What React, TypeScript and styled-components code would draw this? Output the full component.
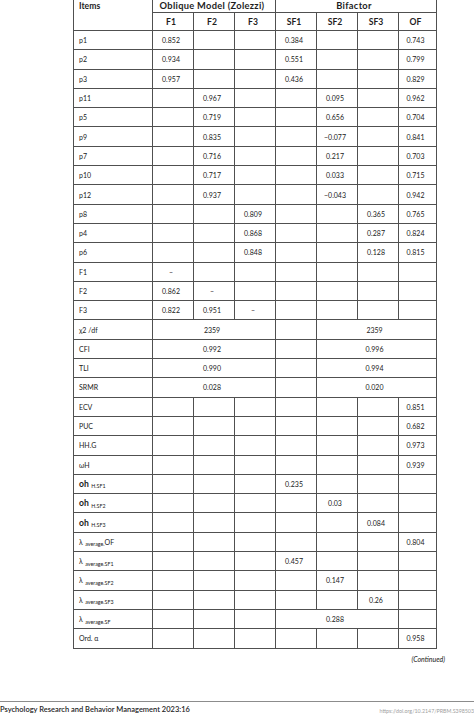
import React, { FC, ReactNode } from "react";
import styled, { createGlobalStyle } from "styled-components";

const GlobalStyle = createGlobalStyle`
  html, body {
    margin: 0;
    padding: 0;
    background: #fff;
  }
  body {
    font-family: Lato, "Open Sans", "Liberation Sans", sans-serif;
    color: #222;
  }
`;

const Page = styled.div`
  width: 474px;
  height: 717px;
  overflow: hidden;
  display: flex;
  flex-direction: column;
`;

const TableWrap = styled.div`
  margin: -6px 0 0 73px;
  width: 363px;
`;

const Table = styled.table`
  border-collapse: collapse;
  table-layout: fixed;
  width: 363px;
`;

const Row = styled.tr<{ h: number }>`
  height: ${(p) => p.h}px;
`;

const Th = styled.th<{ left?: boolean; top?: boolean; wide?: boolean }>`
  border: 1px solid #505050;
  font-size: ${(p) => (p.wide ? "9.3px" : "8.6px")};
  letter-spacing: ${(p) => (p.wide ? "0.3px" : "0")};
  line-height: 10px;
  font-weight: 700;
  color: #1e1e1e;
  padding: ${(p) =>
    p.left ? "6px 0 0 5px" : p.wide ? "0 4px 1px 0" : "0 4px 0 0"};
  text-align: ${(p) => (p.left ? "left" : "center")};
  vertical-align: ${(p) => (p.top ? "top" : p.wide ? "bottom" : "middle")};
  white-space: nowrap;
`;

const Td = styled.td<{ label?: boolean }>`
  border: 1px solid #505050;
  font-size: 7px;
  color: #1a1a1a;
  padding: ${(p) => (p.label ? "0 0 0 5px" : "0 4px 0 0")};
  text-align: ${(p) => (p.label ? "left" : "center")};
  vertical-align: middle;
  white-space: nowrap;
  overflow: hidden;
`;

const Sub = styled.sub`
  font-size: 5.3px;
  vertical-align: -1.5px;
  line-height: 0;
  margin-left: 2.5px;
`;

const Omega = styled.span`
  font-weight: 700;
  font-size: 8.6px;
`;

const Continued = styled.div`
  text-align: right;
  padding-right: 29px;
  margin-top: 6px;
  font-size: 7px;
  font-style: italic;
  color: #222;
`;

const Footer = styled.div`
  margin-top: auto;
  height: 12px;
  border-top: 1px solid #8c8c8c;
  display: flex;
  justify-content: space-between;
  align-items: flex-start;
  padding-top: 3px;
`;

const Journal = styled.span`
  font-size: 7.5px;
  font-weight: 600;
  color: #262626;
  line-height: 10px;
`;

const Doi = styled.span`
  font-size: 5.3px;
  color: #a0a0a0;
  line-height: 8px;
  padding-top: 2px;
`;

type Cell = string | { text: string; span: number };

type BodyRow = { label: ReactNode; cells: Cell[] };

const e = "";
const DASH = "–";

const rows: BodyRow[] = [
  { label: "p1", cells: ["0.852", e, e, "0.384", e, e, "0.743"] },
  { label: "p2", cells: ["0.934", e, e, "0.551", e, e, "0.799"] },
  { label: "p3", cells: ["0.957", e, e, "0.436", e, e, "0.829"] },
  { label: "p11", cells: [e, "0.967", e, e, "0.095", e, "0.962"] },
  { label: "p5", cells: [e, "0.719", e, e, "0.656", e, "0.704"] },
  { label: "p9", cells: [e, "0.835", e, e, "−0.077", e, "0.841"] },
  { label: "p7", cells: [e, "0.716", e, e, "0.217", e, "0.703"] },
  { label: "p10", cells: [e, "0.717", e, e, "0.033", e, "0.715"] },
  { label: "p12", cells: [e, "0.937", e, e, "−0.043", e, "0.942"] },
  { label: "p8", cells: [e, e, "0.809", e, e, "0.365", "0.765"] },
  { label: "p4", cells: [e, e, "0.868", e, e, "0.287", "0.824"] },
  { label: "p6", cells: [e, e, "0.848", e, e, "0.128", "0.815"] },
  { label: "F1", cells: [DASH, e, e, e, e, e, e] },
  { label: "F2", cells: ["0.862", DASH, e, e, e, e, e] },
  { label: "F3", cells: ["0.822", "0.951", DASH, e, e, e, e] },
  {
    label: "χ2 /df",
    cells: [{ text: "2359", span: 3 }, e, { text: "2359", span: 3 }],
  },
  {
    label: "CFI",
    cells: [{ text: "0.992", span: 3 }, e, { text: "0.996", span: 3 }],
  },
  {
    label: "TLI",
    cells: [{ text: "0.990", span: 3 }, e, { text: "0.994", span: 3 }],
  },
  {
    label: "SRMR",
    cells: [{ text: "0.028", span: 3 }, e, { text: "0.020", span: 3 }],
  },
  { label: "ECV", cells: [e, e, e, e, e, e, "0.851"] },
  { label: "PUC", cells: [e, e, e, e, e, e, "0.682"] },
  { label: "HH.G", cells: [e, e, e, e, e, e, "0.973"] },
  { label: "ωH", cells: [e, e, e, e, e, e, "0.939"] },
  {
    label: (
      <>
        <Omega>oh</Omega>
        <Sub>H.SF1</Sub>
      </>
    ),
    cells: [e, e, e, "0.235", e, e, e],
  },
  {
    label: (
      <>
        <Omega>oh</Omega>
        <Sub>H.SF2</Sub>
      </>
    ),
    cells: [e, e, e, e, "0.03", e, e],
  },
  {
    label: (
      <>
        <Omega>oh</Omega>
        <Sub>H.SF3</Sub>
      </>
    ),
    cells: [e, e, e, e, e, "0.084", e],
  },
  {
    label: (
      <>
        λ<Sub>average.</Sub>OF
      </>
    ),
    cells: [e, e, e, e, e, e, "0.804"],
  },
  {
    label: (
      <>
        λ<Sub>average.SF1</Sub>
      </>
    ),
    cells: [e, e, e, "0.457", e, e, e],
  },
  {
    label: (
      <>
        λ<Sub>average.SF2</Sub>
      </>
    ),
    cells: [e, e, e, e, "0.147", e, e],
  },
  {
    label: (
      <>
        λ<Sub>average.SF3</Sub>
      </>
    ),
    cells: [e, e, e, e, e, "0.26", e],
  },
  {
    label: (
      <>
        λ<Sub>average.SF</Sub>
      </>
    ),
    cells: [e, e, e, { text: "0.288", span: 3 }, e],
  },
  { label: "Ord. α", cells: [e, e, e, e, e, e, "0.958"] },
];

const colWidths = [79, 41, 41, 41, 41, 41, 41, 38];
const subHeads = ["F1", "F2", "F3", "SF1", "SF2", "SF3", "OF"];

const BodyLine: FC<{ row: BodyRow }> = ({ row }) => (
  <Row h={19.3}>
    <Td label>{row.label}</Td>
    {row.cells.map((c, i) =>
      typeof c === "string" ? (
        <Td key={i}>{c}</Td>
      ) : (
        <Td key={i} colSpan={c.span}>
          {c.text}
        </Td>
      )
    )}
  </Row>
);

export default function App() {
  return (
    <>
      <GlobalStyle />
      <Page>
        <TableWrap>
          <Table>
            <colgroup>
              {colWidths.map((w, i) => (
                <col key={i} style={{ width: w }} />
              ))}
            </colgroup>
            <thead>
              <Row h={18}>
                <Th left top rowSpan={2}>
                  Items
                </Th>
                <Th wide colSpan={3}>
                  Oblique Model (Zolezzi)
                </Th>
                <Th wide colSpan={4}>
                  Bifactor
                </Th>
              </Row>
              <Row h={18}>
                {subHeads.map((h) => (
                  <Th key={h}>{h}</Th>
                ))}
              </Row>
            </thead>
            <tbody>
              {rows.map((r, i) => (
                <BodyLine key={i} row={r} />
              ))}
            </tbody>
          </Table>
        </TableWrap>
        <Continued>(Continued)</Continued>
        <Footer>
          <Journal>Psychology Research and Behavior Management 2023:16</Journal>
          <Doi>https://doi.org/10.2147/PRBM.S398503</Doi>
        </Footer>
      </Page>
    </>
  );
}
